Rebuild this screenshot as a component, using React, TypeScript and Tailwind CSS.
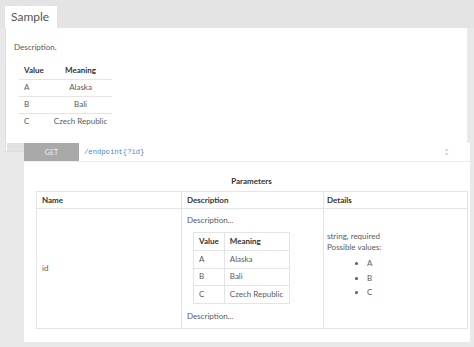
import React from "react";

const rows = [
    { value: "A", meaning: "Alaska" },
    { value: "B", meaning: "Bali" },
    { value: "C", meaning: "Czech Republic" },
];

function SortIcon() {
    return (
        <svg width="5" height="8" viewBox="0 0 5 8" className="text-[#c8c8c8]">
            <path d="M2.5 0.5 L4.5 2.8 H0.5 Z M2.5 7.5 L4.5 5.2 H0.5 Z" fill="currentColor" />
        </svg>
    );
}

export default function App() {
    return (
        <div className="w-[474px] h-[347px] overflow-hidden bg-[#e9e9e9] font-['Lato','Liberation_Sans',sans-serif] text-[8px] leading-[11px] text-[#5a5a5a]">
            {/* tab strip */}
            <div className="h-[28px] bg-[#e4e4e4] pt-[6px] pl-[5px] flex">
                <div className="w-[52px] bg-white pl-[6px] pt-[3px] text-[12px] leading-[16px] text-[#555]">Sample</div>
            </div>

            {/* sample card */}
            <div className="ml-[5px] w-[462px] bg-white border-l border-b border-[#dedede] pt-[14px] pl-[8px] pb-[21px]">
                <p>Description.</p>
                <table className="ml-[5px] mt-[9px] border-collapse">
                    <thead>
                        <tr className="h-[17px]">
                            <th className="px-[5px] text-left font-bold text-[#333]">Value</th>
                            <th className="px-[5px] text-center font-bold text-[#333]">Meaning</th>
                        </tr>
                    </thead>
                    <tbody>
                        {rows.map((r) => (
                            <tr key={r.value} className="h-[17px] border-t border-[#e4e4e4]">
                                <td className="px-[5px] text-left">{r.value}</td>
                                <td className="px-[5px] text-center">{r.meaning}</td>
                            </tr>
                        ))}
                    </tbody>
                </table>
            </div>

            {/* endpoint */}
            <div className="relative -mt-[9px] ml-[7px] flex">
                <div className="w-[17px] h-[8px] bg-[#e2e2e2]" />
                <div className="w-[446px] flex flex-col">
                    <div className="h-[19px] flex items-center bg-white border-b border-[#ececec]">
                        <div className="w-[55px] h-full bg-[#a9a9a9] text-[#eeeeee] text-[7px] flex items-center justify-center">GET</div>
                        <span className="ml-[5px] font-['Liberation_Mono',monospace] text-[7.2px] text-[#4a86c8]">/endpoint{"{?id}"}</span>
                        <div className="ml-auto mr-[21px] flex">
                            <SortIcon />
                        </div>
                    </div>

                    <div className="bg-white pt-[14px] pl-[12px] pb-[13px]">
                        <div className="text-center font-bold text-[#333] pr-[3px] mb-[4px]">Parameters</div>
                        <table className="w-[431px] border-collapse border border-[#e4e4e4] table-fixed">
                            <colgroup>
                                <col className="w-[145px]" />
                                <col className="w-[142px]" />
                                <col className="w-[144px]" />
                            </colgroup>
                            <thead>
                                <tr className="h-[17px]">
                                    <th className="border border-[#e4e4e4] px-[5px] text-left font-bold text-[#333]">Name</th>
                                    <th className="border border-[#e4e4e4] px-[5px] text-left font-bold text-[#333]">Description</th>
                                    <th className="border border-[#e4e4e4] px-[3px] text-left font-bold text-[#333]">Details</th>
                                </tr>
                            </thead>
                            <tbody>
                                <tr className="h-[120px]">
                                    <td className="border border-[#e4e4e4] px-[5px] align-middle">id</td>
                                    <td className="border border-[#e4e4e4] px-[5px] align-top pt-[6px]">
                                        <p>Description...</p>
                                        <table className="ml-[6px] mt-[6px] border-collapse border border-[#e4e4e4]">
                                            <thead>
                                                <tr className="h-[18px]">
                                                    <th className="border border-[#e4e4e4] px-[5px] text-left font-bold text-[#333]">Value</th>
                                                    <th className="border border-[#e4e4e4] px-[5px] w-[65px] text-left font-bold text-[#333]">Meaning</th>
                                                </tr>
                                            </thead>
                                            <tbody>
                                                {rows.map((r) => (
                                                    <tr key={r.value} className="h-[17.5px]">
                                                        <td className="border border-[#e4e4e4] px-[5px]">{r.value}</td>
                                                        <td className="border border-[#e4e4e4] px-[5px]">{r.meaning}</td>
                                                    </tr>
                                                ))}
                                            </tbody>
                                        </table>
                                        <p className="mt-[7px]">Description...</p>
                                    </td>
                                    <td className="border border-[#e4e4e4] px-[3px] align-middle">
                                        <p>string, required</p>
                                        <p>Possible values:</p>
                                        <ul className="list-disc pl-[40px] mt-[3px] mb-[6px] leading-[14.5px]">
                                            <li>A</li>
                                            <li>B</li>
                                            <li>C</li>
                                        </ul>
                                    </td>
                                </tr>
                            </tbody>
                        </table>
                    </div>
                </div>
            </div>
        </div>
    );
}
